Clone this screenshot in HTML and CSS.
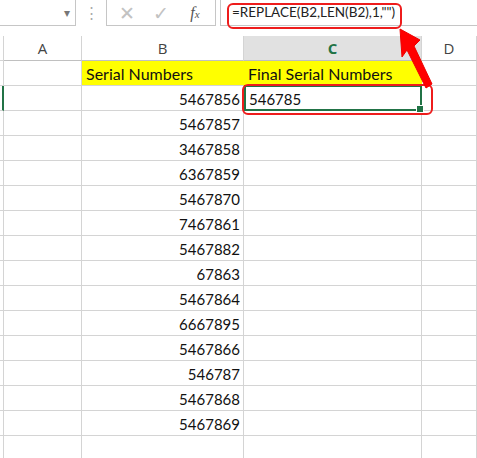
FILE: index.html
```html
<!DOCTYPE html>
<html lang="en">
<head>
  <meta charset="UTF-8" />
  <title>REPLACE formula - Excel</title>
  <link rel="stylesheet" href="styles.css">
</head>
<body>
  <div class="formula-bar">
    <div class="name-box"><span class="drop">&#9662;</span></div>
    <div class="dots">&#8942;</div>
    <div class="fx-buttons">
      <span class="btn">&#10005;</span>
      <span class="btn">&#10003;</span>
      <span class="btn fx">f<sub>x</sub></span>
    </div>
    <div class="formula-input">=REPLACE(B2,LEN(B2),1,"")</div>
  </div>

  <div class="sheet top">
    <div class="rh head"></div>
    <div class="ch">A</div>
    <div class="ch">B</div>
    <div class="ch active">C</div>
    <div class="ch">D</div>

    <div class="rh"></div>
    <div class="cell"></div>
    <div class="cell yellow">Serial Numbers</div>
    <div class="cell yellow">Final Serial Numbers</div>
    <div class="cell"></div>

    <div class="rh selected"></div>
    <div class="cell"></div>
    <div class="cell num">5467856</div>
    <div class="cell current">546785<span class="handle"></span></div>
    <div class="cell"></div>
  </div>

  <div class="sheet" id="rows"></div>

  <div class="callout formula-callout"></div>
  <div class="callout cell-callout"></div>
  <svg class="arrow" width="477" height="458" viewBox="0 0 477 458">
    <polygon points="400,29 420,40 414,46 432,84 426,88 407,50 402,57" fill="#f00" stroke="#e00" stroke-width="1" stroke-linejoin="round"/>
  </svg>

  <script>
    const serials = ["5467857", "3467858", "6367859", "5467870", "7467861", "5467882",
      "67863", "5467864", "6667895", "5467866", "546787", "5467868", "5467869", ""];
    const rows = document.getElementById("rows");
    serials.forEach(n => {
      rows.insertAdjacentHTML("beforeend",
        '<div class="rh"></div><div class="cell"></div>' +
        '<div class="cell num">' + n + '</div><div class="cell"></div><div class="cell"></div>');
    });
  </script>
</body>
</html>
```

FILE: styles.css
```css
body {
  margin: 0;
  width: 477px;
  height: 458px;
  overflow: hidden;
  position: relative;
  background: #fff;
  font-family: Lato, "Open Sans", sans-serif;
  color: #111;
}
.formula-bar {
  display: flex;
  align-items: stretch;
  height: 27px;
  margin-top: -1px;
}
.name-box {
  width: 77px;
  margin-left: -1px;
  box-sizing: border-box;
  border: 1px solid #c6c6c6;
  display: flex;
  justify-content: flex-end;
  align-items: center;
  padding-right: 5px;
}
.drop {
  color: #777;
  font-size: 12px;
}
.dots {
  width: 30px;
  text-align: center;
  color: #aaa;
  font-size: 15px;
  line-height: 27px;
}
.fx-buttons {
  width: 110px;
  box-sizing: border-box;
  border: 1px solid #c6c6c6;
  display: flex;
  justify-content: space-around;
  align-items: center;
  padding: 0 3px;
}
.btn {
  color: #c2c2c2;
  font-size: 19px;
  width: 33px;
  text-align: center;
}
.btn.fx {
  color: #555;
  font-family: "Liberation Serif", serif;
  font-style: italic;
  font-size: 16px;
}
.btn.fx sub {
  font-size: 11px;
  vertical-align: 0;
}
.formula-input {
  flex: 1;
  margin-left: 4px;
  box-sizing: border-box;
  border: 1px solid #c6c6c6;
  border-right: none;
  padding-left: 11px;
  font-size: 13.5px;
  line-height: 25px;
  color: #222;
  white-space: nowrap;
}
.sheet {
  display: grid;
  grid-template-columns: 4px 78px 162px 178px 1fr;
  grid-auto-rows: 25px;
}
.sheet.top {
  margin-top: 10px;
}
.sheet > div {
  box-sizing: border-box;
  border-right: 1px solid #d4d4d4;
  border-bottom: 1px solid #d4d4d4;
}
.rh {
  border-right: 1px solid #c0c0c0;
}
.rh.selected {
  border-right: 2px solid #217346 !important;
}
.ch {
  text-align: center;
  font-family: "Open Sans", sans-serif;
  font-size: 15px;
  line-height: 24px;
  color: #444;
  border-bottom-color: #c0c0c0 !important;
}
.ch.active {
  background: #e1e1e1;
  color: #217346;
  font-weight: bold;
  border-bottom-color: #bdbdbd !important;
}
.cell {
  font-size: 15px;
  line-height: 26px;
  padding: 0 4px;
  white-space: nowrap;
}
.cell.yellow {
  background: #ffff00;
  border-right-color: #ffff00;
  font-size: 16px;
}
.cell.num {
  text-align: right;
  padding-right: 3px;
}
.cell.current {
  position: relative;
  border: 2px solid #217346 !important;
  margin-top: -1px;
  line-height: 24px;
  padding-left: 3px;
}
.handle {
  position: absolute;
  right: -4px;
  bottom: -4px;
  width: 6px;
  height: 6px;
  background: #217346;
  border: 1px solid #fff;
}
.callout {
  position: absolute;
  border: 2px solid #ee1c1c;
  border-radius: 6px;
  box-sizing: border-box;
}
.formula-callout {
  left: 227px;
  top: 3px;
  width: 175px;
  height: 26px;
}
.cell-callout {
  left: 242px;
  top: 84px;
  width: 191px;
  height: 31px;
}
.arrow {
  position: absolute;
  left: 0;
  top: 0;
  pointer-events: none;
}
```
